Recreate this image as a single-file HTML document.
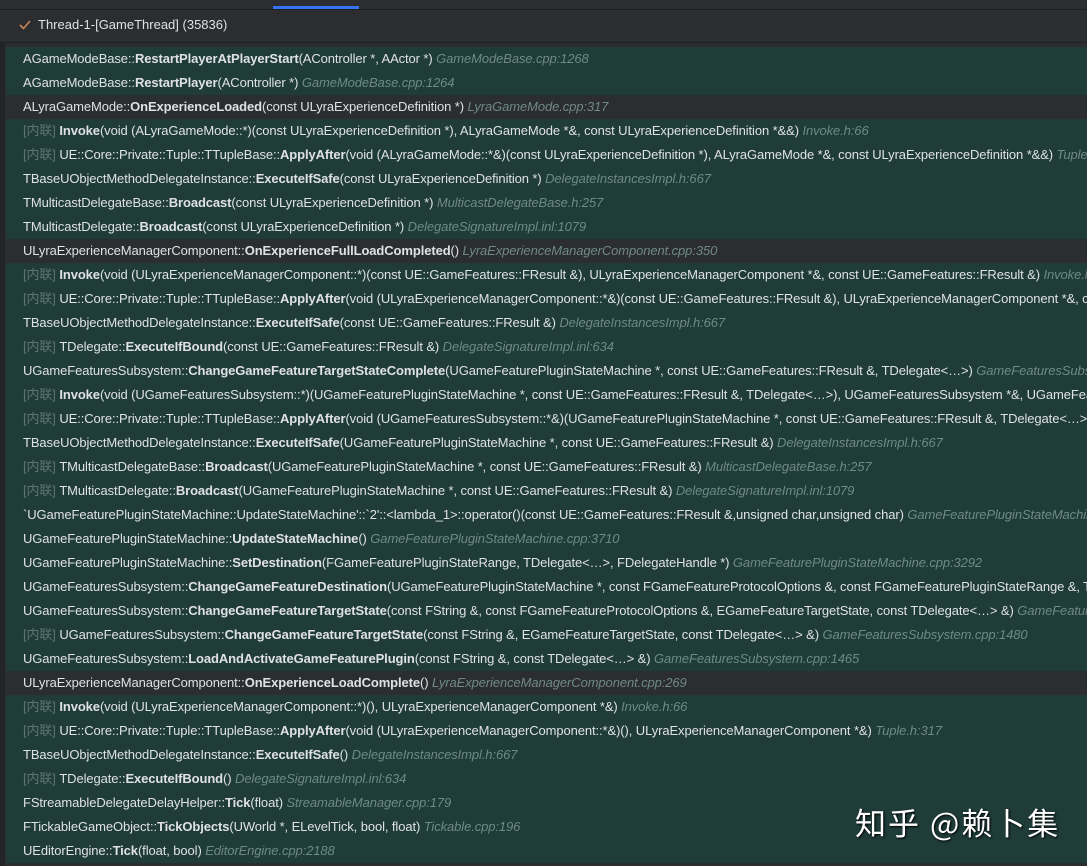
<!DOCTYPE html>
<html><head><meta charset="utf-8"><style>
body{margin:0;width:1087px;height:866px;overflow:hidden;background:#2b2d30;font-family:"Liberation Sans","Noto Sans CJK SC",sans-serif;position:relative}
.top{position:absolute;left:0;top:0;width:1087px;height:9px;background:#2b2d30;border-bottom:1px solid #1e1f22}
.ul{position:absolute;left:273px;top:6px;width:86px;height:3px;background:#3574f0}
.hdr{position:absolute;left:0;top:10px;width:1087px;height:32px;background:#2b2d30;border-bottom:1px solid #1e1f22;color:#dfe1e5;font-size:13px;line-height:30px}
.hdr span{position:absolute;left:38px}
.hdr svg{position:absolute;left:19px;top:10px}
.strip{position:absolute;left:0;top:10px;width:5px;height:856px;background:#232427}
.rows{position:absolute;left:6px;top:47px;width:1081px}
.r{height:24px;line-height:24px;background:#1f3c39;color:#dfe1e5;font-size:13px;white-space:nowrap;overflow:hidden;padding-left:17px;letter-spacing:-0.1px}
.r.d{background:#2b2d30}
.r b{font-weight:bold}
.r i{color:#6f8a86;font-style:italic}
.r .n{color:#5f7572}
.wm{position:absolute;left:855px;top:799px;color:#fff;font-size:31px;font-family:"Noto Sans CJK SC",sans-serif;text-shadow:1px 1px 2px #000;letter-spacing:2px}
</style></head><body>
<div class="top"></div><div class="ul"></div>
<div class="strip"></div>
<div class="hdr"><svg width="12" height="10" viewBox="0 0 12 10"><path d="M1 5 L4.5 8.5 L11 1" stroke="#c8875a" stroke-width="1.6" fill="none"/></svg><span>Thread-1-[GameThread] (35836)</span></div>
<div class="rows">
<div class="r">AGameModeBase::<b>RestartPlayerAtPlayerStart</b>(AController *, AActor *) <i>GameModeBase.cpp:1268</i></div>
<div class="r">AGameModeBase::<b>RestartPlayer</b>(AController *) <i>GameModeBase.cpp:1264</i></div>
<div class="r d">ALyraGameMode::<b>OnExperienceLoaded</b>(const ULyraExperienceDefinition *) <i>LyraGameMode.cpp:317</i></div>
<div class="r"><span class="n">[内联]</span> <b>Invoke</b>(void (ALyraGameMode::*)(const ULyraExperienceDefinition *), ALyraGameMode *&amp;, const ULyraExperienceDefinition *&amp;&amp;) <i>Invoke.h:66</i></div>
<div class="r"><span class="n">[内联]</span> UE::Core::Private::Tuple::TTupleBase::<b>ApplyAfter</b>(void (ALyraGameMode::*&amp;)(const ULyraExperienceDefinition *), ALyraGameMode *&amp;, const ULyraExperienceDefinition *&amp;&amp;) <i>Tuple.h</i></div>
<div class="r">TBaseUObjectMethodDelegateInstance::<b>ExecuteIfSafe</b>(const ULyraExperienceDefinition *) <i>DelegateInstancesImpl.h:667</i></div>
<div class="r">TMulticastDelegateBase::<b>Broadcast</b>(const ULyraExperienceDefinition *) <i>MulticastDelegateBase.h:257</i></div>
<div class="r">TMulticastDelegate::<b>Broadcast</b>(const ULyraExperienceDefinition *) <i>DelegateSignatureImpl.inl:1079</i></div>
<div class="r d">ULyraExperienceManagerComponent::<b>OnExperienceFullLoadCompleted</b>() <i>LyraExperienceManagerComponent.cpp:350</i></div>
<div class="r"><span class="n">[内联]</span> <b>Invoke</b>(void (ULyraExperienceManagerComponent::*)(const UE::GameFeatures::FResult &amp;), ULyraExperienceManagerComponent *&amp;, const UE::GameFeatures::FResult &amp;) <i>Invoke.h:66</i></div>
<div class="r"><span class="n">[内联]</span> UE::Core::Private::Tuple::TTupleBase::<b>ApplyAfter</b>(void (ULyraExperienceManagerComponent::*&amp;)(const UE::GameFeatures::FResult &amp;), ULyraExperienceManagerComponent *&amp;, const</div>
<div class="r">TBaseUObjectMethodDelegateInstance::<b>ExecuteIfSafe</b>(const UE::GameFeatures::FResult &amp;) <i>DelegateInstancesImpl.h:667</i></div>
<div class="r"><span class="n">[内联]</span> TDelegate::<b>ExecuteIfBound</b>(const UE::GameFeatures::FResult &amp;) <i>DelegateSignatureImpl.inl:634</i></div>
<div class="r">UGameFeaturesSubsystem::<b>ChangeGameFeatureTargetStateComplete</b>(UGameFeaturePluginStateMachine *, const UE::GameFeatures::FResult &amp;, TDelegate&lt;…&gt;) <i>GameFeaturesSubsystem.cpp</i></div>
<div class="r"><span class="n">[内联]</span> <b>Invoke</b>(void (UGameFeaturesSubsystem::*)(UGameFeaturePluginStateMachine *, const UE::GameFeatures::FResult &amp;, TDelegate&lt;…&gt;), UGameFeaturesSubsystem *&amp;, UGameFeatures</div>
<div class="r"><span class="n">[内联]</span> UE::Core::Private::Tuple::TTupleBase::<b>ApplyAfter</b>(void (UGameFeaturesSubsystem::*&amp;)(UGameFeaturePluginStateMachine *, const UE::GameFeatures::FResult &amp;, TDelegate&lt;…&gt;), UGameFeatures</div>
<div class="r">TBaseUObjectMethodDelegateInstance::<b>ExecuteIfSafe</b>(UGameFeaturePluginStateMachine *, const UE::GameFeatures::FResult &amp;) <i>DelegateInstancesImpl.h:667</i></div>
<div class="r"><span class="n">[内联]</span> TMulticastDelegateBase::<b>Broadcast</b>(UGameFeaturePluginStateMachine *, const UE::GameFeatures::FResult &amp;) <i>MulticastDelegateBase.h:257</i></div>
<div class="r"><span class="n">[内联]</span> TMulticastDelegate::<b>Broadcast</b>(UGameFeaturePluginStateMachine *, const UE::GameFeatures::FResult &amp;) <i>DelegateSignatureImpl.inl:1079</i></div>
<div class="r">`UGameFeaturePluginStateMachine::UpdateStateMachine'::`2'::&lt;lambda_1&gt;::operator()(const UE::GameFeatures::FResult &amp;,unsigned char,unsigned char) <i>GameFeaturePluginStateMachine.cpp</i></div>
<div class="r">UGameFeaturePluginStateMachine::<b>UpdateStateMachine</b>() <i>GameFeaturePluginStateMachine.cpp:3710</i></div>
<div class="r">UGameFeaturePluginStateMachine::<b>SetDestination</b>(FGameFeaturePluginStateRange, TDelegate&lt;…&gt;, FDelegateHandle *) <i>GameFeaturePluginStateMachine.cpp:3292</i></div>
<div class="r">UGameFeaturesSubsystem::<b>ChangeGameFeatureDestination</b>(UGameFeaturePluginStateMachine *, const FGameFeatureProtocolOptions &amp;, const FGameFeaturePluginStateRange &amp;, TDelegate</div>
<div class="r">UGameFeaturesSubsystem::<b>ChangeGameFeatureTargetState</b>(const FString &amp;, const FGameFeatureProtocolOptions &amp;, EGameFeatureTargetState, const TDelegate&lt;…&gt; &amp;) <i>GameFeaturesSubsystem.cpp</i></div>
<div class="r"><span class="n">[内联]</span> UGameFeaturesSubsystem::<b>ChangeGameFeatureTargetState</b>(const FString &amp;, EGameFeatureTargetState, const TDelegate&lt;…&gt; &amp;) <i>GameFeaturesSubsystem.cpp:1480</i></div>
<div class="r">UGameFeaturesSubsystem::<b>LoadAndActivateGameFeaturePlugin</b>(const FString &amp;, const TDelegate&lt;…&gt; &amp;) <i>GameFeaturesSubsystem.cpp:1465</i></div>
<div class="r d">ULyraExperienceManagerComponent::<b>OnExperienceLoadComplete</b>() <i>LyraExperienceManagerComponent.cpp:269</i></div>
<div class="r"><span class="n">[内联]</span> <b>Invoke</b>(void (ULyraExperienceManagerComponent::*)(), ULyraExperienceManagerComponent *&amp;) <i>Invoke.h:66</i></div>
<div class="r"><span class="n">[内联]</span> UE::Core::Private::Tuple::TTupleBase::<b>ApplyAfter</b>(void (ULyraExperienceManagerComponent::*&amp;)(), ULyraExperienceManagerComponent *&amp;) <i>Tuple.h:317</i></div>
<div class="r">TBaseUObjectMethodDelegateInstance::<b>ExecuteIfSafe</b>() <i>DelegateInstancesImpl.h:667</i></div>
<div class="r"><span class="n">[内联]</span> TDelegate::<b>ExecuteIfBound</b>() <i>DelegateSignatureImpl.inl:634</i></div>
<div class="r">FStreamableDelegateDelayHelper::<b>Tick</b>(float) <i>StreamableManager.cpp:179</i></div>
<div class="r">FTickableGameObject::<b>TickObjects</b>(UWorld *, ELevelTick, bool, float) <i>Tickable.cpp:196</i></div>
<div class="r">UEditorEngine::<b>Tick</b>(float, bool) <i>EditorEngine.cpp:2188</i></div>
</div>
<div class="wm">知乎 @赖卜集</div>
</body></html>
